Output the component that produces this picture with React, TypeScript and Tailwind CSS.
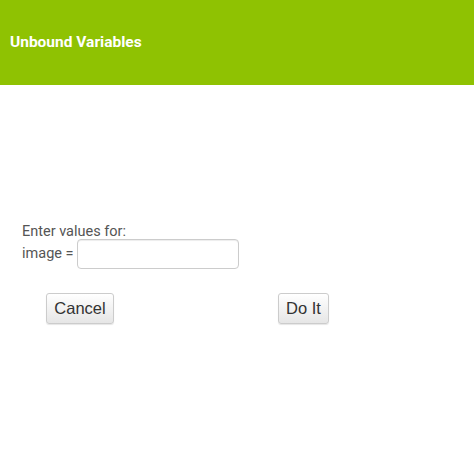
export default function App() {
  return (
    <div className="h-[474px] w-[474px] bg-white font-['Roboto',sans-serif]">
      {/* Title bar */}
      <div className="flex h-[85px] items-center bg-[#8fc202] pl-[10px]">
        <h2 className="text-[15.5px] font-bold text-white">Unbound Variables</h2>
      </div>

      {/* Body */}
      <div className="pl-[22px] pt-[138px] text-[14.5px] text-[#555]">
        <p className="leading-[18px]">Enter values for:</p>
        <div className="mt-[-2px] flex items-center">
          <span className="mr-[3px]">image =</span>
          <input
            type="text"
            className="h-[30px] w-[162px] rounded-[4px] border border-[#ccc] bg-white px-2 text-[14px] text-[#333] shadow-[inset_0_1px_1px_rgba(0,0,0,0.075)] outline-none"
          />
        </div>
      </div>

      {/* Actions */}
      <div className="mt-[24px] flex font-['Liberation_Sans',Arial,sans-serif]">
        <button className="ml-[46px] h-[31px] w-[68px] rounded-[3px] border border-[#ccc] bg-linear-to-b from-white to-[#e6e6e6] text-[16.5px] text-[#333] shadow-[0_1px_1px_rgba(0,0,0,0.1)]">
          Cancel
        </button>
        <button className="ml-[164px] h-[31px] w-[51px] rounded-[3px] border border-[#ccc] bg-linear-to-b from-white to-[#e6e6e6] text-[16.5px] text-[#333] shadow-[0_1px_1px_rgba(0,0,0,0.1)]">
          Do It
        </button>
      </div>
    </div>
  )
}
